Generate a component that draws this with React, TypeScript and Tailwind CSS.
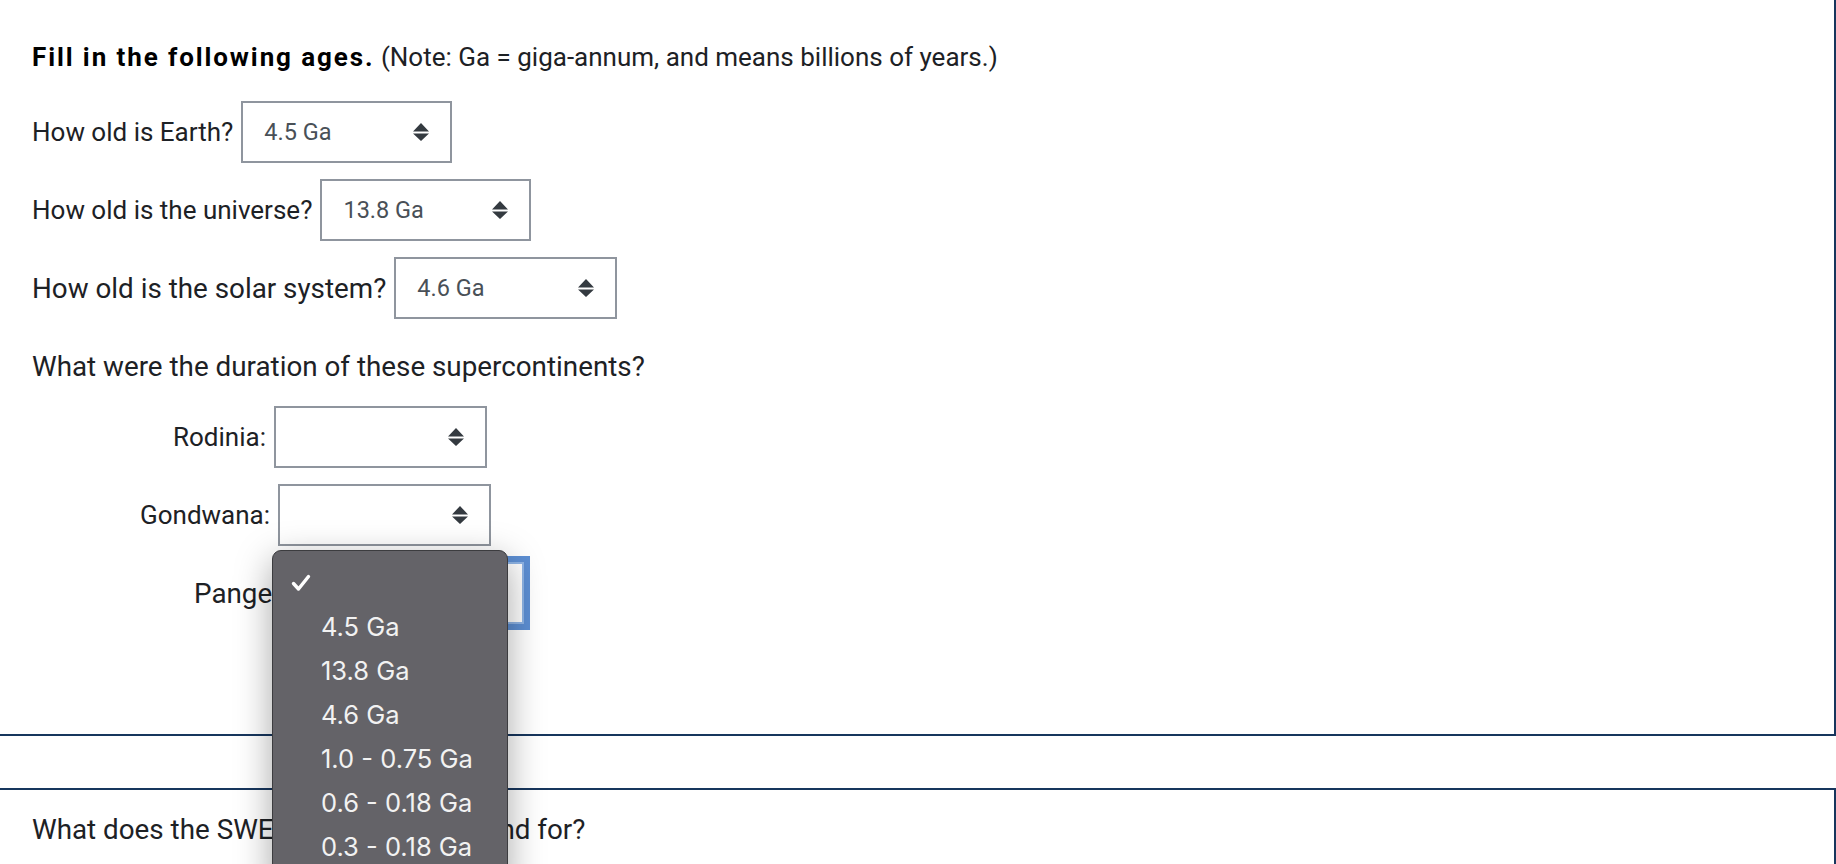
import React from "react";

const OPTIONS = ["4.5 Ga", "13.8 Ga", "4.6 Ga", "1.0 - 0.75 Ga", "0.6 - 0.18 Ga", "0.3 - 0.18 Ga", "0.2 - 0.15 Ga"];

const Arrows = () => (
	<svg width="16" height="20" viewBox="0 0 16 20" className="shrink-0" aria-hidden="true">
		<path d="M8 1L0 10h16z M0 12h16l-8 8z" fill="#343a40" transform="scale(1 0.95)" />
	</svg>
);

type SelectProps = {
	value?: string;
	width: string;
	focused?: boolean;
};

const FakeSelect = ({ value, width, focused }: SelectProps) => (
	<div
		className={`flex h-[62px] shrink-0 items-center justify-between border-2 bg-white pl-[21px] pr-[21px] ${width} ${
			focused ? "border-[#8fb5e6] shadow-[0_0_0_6px_#5d8fd3]" : "border-[#8f959e]"
		}`}
	>
		<span className="text-[23.5px] text-[#495057]">{value ?? ""}</span>
		<Arrows />
	</div>
);

const Row = ({
	label,
	children,
	pad,
	labelClass,
}: {
	label: string;
	children: React.ReactNode;
	pad?: string;
	labelClass?: string;
}) => (
	<div className={`flex items-center gap-[8px] ${pad ?? ""}`}>
		<span className={labelClass}>{label}</span>
		{children}
	</div>
);

const Check = () => (
	<svg width="20" height="18" viewBox="0 0 20 18" aria-hidden="true">
		<path d="M2.5 9.5L7.5 15L17.5 2.5" fill="none" stroke="#ffffff" strokeWidth="3.4" strokeLinecap="round" strokeLinejoin="round" />
	</svg>
);

export default function App() {
	return (
		<div className="relative h-[864px] w-full overflow-hidden bg-white font-['Roboto',sans-serif] text-[26px] leading-[39px] text-[#1d2125]">
			<div className="-ml-[10px] -mt-[10px] h-[746px] border-2 border-[#17365d] pl-[40px] pt-[46px]">
				<p>
					<strong className="font-bold tracking-[1.9px] text-black">Fill in the following ages.</strong> (Note: Ga =
					giga-annum, and means billions of years.)
				</p>

				<div className="mt-[24px] flex flex-col gap-[16px]">
					<Row label="How old is Earth?">
						<FakeSelect value="4.5 Ga" width="w-[211px]" />
					</Row>
					<Row label="How old is the universe?">
						<FakeSelect value="13.8 Ga" width="w-[211px]" />
					</Row>
					<Row label="How old is the solar system?" labelClass="text-[27.8px]">
						<FakeSelect value="4.6 Ga" width="w-[223px]" />
					</Row>
				</div>

				<p className="mt-[28px] text-[27.8px]">What were the duration of these supercontinents?</p>

				<div className="mt-[20px] flex flex-col gap-[16px]">
					<Row label="Rodinia:" pad="pl-[141px]">
						<FakeSelect width="w-[213px]" />
					</Row>
					<Row label="Gondwana:" pad="pl-[108px]">
						<FakeSelect width="w-[213px]" />
					</Row>
					<Row label="Pangea:" pad="pl-[162px]" labelClass="text-[27.8px]">
						<FakeSelect width="w-[222px]" focused />
					</Row>
				</div>
			</div>

			<div className="-ml-[10px] mt-[52px] h-[200px] border-2 border-[#17365d] pl-[40px] pt-[20px]">
				<p className="text-[27.8px]">
					What does the SWE<span className="tracking-[0.8px]">BOK acronym sta</span>nd for?
				</p>
			</div>

			{/* open native dropdown over the Pangea select */}
			<div className="absolute left-[272px] top-[550px] h-[340px] w-[236px] rounded-[9px] border border-[#3c3c3f] bg-[#646368] pt-[10px] font-['Inter',sans-serif] text-[25.5px] leading-[44px] text-[#f2f2f2] shadow-[0_10px_36px_rgba(0,0,0,0.35)]">
				<div className="flex h-[44px] items-center pl-[18px]">
					<Check />
				</div>
				{OPTIONS.map((o) => (
					<div key={o} className="h-[44px] pl-[48px]">
						{o}
					</div>
				))}
			</div>
		</div>
	);
}
